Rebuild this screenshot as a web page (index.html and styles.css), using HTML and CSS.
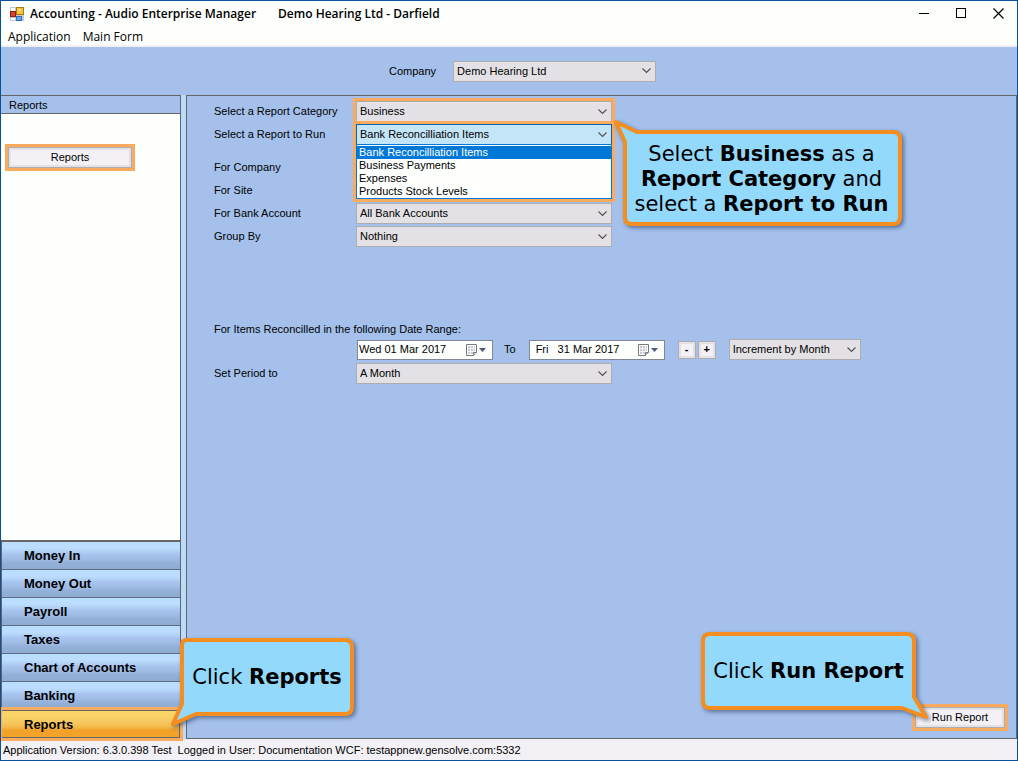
FILE: index.html
```html
<!DOCTYPE html>
<html lang="en">
<head>
    <meta charset="UTF-8">
    <meta name="viewport" content="width=device-width, initial-scale=1.0">
    <title>Accounting - Audio Enterprise Manager</title>
    <link rel="stylesheet" href="styles.css">
</head>
<body>
    <header class="title-bar">
        <svg class="app-icon" width="14" height="14" viewBox="0 0 14 14" aria-hidden="true">
            <rect width="14" height="14" fill="#c9c9cf"/>
            <rect x="1" y="1" width="4" height="3" fill="#fff"/>
            <rect x="1" y="11" width="4" height="2" fill="#fff"/>
            <rect x="0" y="4" width="6" height="6" fill="#8c1d12"/>
            <rect x="1" y="5" width="4" height="4" fill="#d8432c"/>
            <rect x="6" y="0" width="8" height="8" fill="#a87a10"/>
            <rect x="7" y="1" width="6" height="6" fill="#f7c33a"/>
            <rect x="8" y="2" width="3" height="2" fill="#fde08a"/>
            <rect x="6" y="9" width="6" height="5" fill="#2b6fc4"/>
            <rect x="7" y="10" width="4" height="3" fill="#62abf0"/>
        </svg>
        <h1 class="app-title">Accounting - Audio Enterprise Manager</h1>
        <span class="site-title">Demo Hearing Ltd - Darfield</span>
        <div class="window-buttons">
            <button type="button" aria-label="Minimize">
                <svg width="11" height="11" viewBox="0 0 11 11"><path d="M0 5.5H10" stroke="#000"/></svg>
            </button>
            <button type="button" aria-label="Maximize">
                <svg width="11" height="11" viewBox="0 0 11 11"><rect x="0.5" y="0.5" width="9" height="9" fill="none" stroke="#000"/></svg>
            </button>
            <button type="button" aria-label="Close">
                <svg width="11" height="11" viewBox="0 0 11 11"><path d="M0.5 0.5L10.5 10.5M10.5 0.5L0.5 10.5" stroke="#000" stroke-width="1.2"/></svg>
            </button>
        </div>
    </header>

    <nav class="menu-bar">
        <a href="#">Application</a>
        <a href="#">Main Form</a>
    </nav>

    <div class="company-bar">
        <label for="company">Company</label>
        <select id="company" class="combo company-combo"><option>Demo Hearing Ltd</option></select>
    </div>

    <div class="workspace">
        <aside class="sidebar">
            <h2 class="sidebar-title">Reports</h2>
            <div class="sidebar-content">
                <button type="button" class="btn highlight">Reports</button>
            </div>
            <nav class="sidebar-nav">
                <button type="button">Money In</button>
                <button type="button">Money Out</button>
                <button type="button">Payroll</button>
                <button type="button">Taxes</button>
                <button type="button">Chart of Accounts</button>
                <button type="button">Banking</button>
                <button type="button" class="active highlight">Reports</button>
                <div class="callout callout-reports">
                    <svg width="190" height="98" viewBox="0 0 190 98" aria-hidden="true">
                        <path d="M21 6H180Q187 6 187 13V73Q187 80 180 80H31L8 90L17 70V11Q17 6 22 6Z"/>
                    </svg>
                    <p>Click <b>Reports</b></p>
                </div>
            </nav>
        </aside>

        <main class="panel">
            <form class="report-form">
                <label for="category">Select a Report Category</label>
                <select id="category" class="combo highlight"><option>Business</option></select>

                <label for="report">Select a Report to Run</label>
                <div class="open-combo">
                    <select id="report" class="combo"><option>Bank Reconcilliation Items</option></select>
                    <div class="combo-list highlight">
                        <ul role="listbox" aria-label="Select a Report to Run">
                            <li role="option" aria-selected="true">Bank Reconcilliation Items</li>
                            <li role="option">Business Payments</li>
                            <li role="option">Expenses</li>
                            <li role="option">Products Stock Levels</li>
                        </ul>
                    </div>
                    <div class="callout callout-category">
                        <svg width="296" height="114" viewBox="0 0 296 114" aria-hidden="true">
                            <path d="M26 13H282Q289 13 289 20V98Q289 105 282 105H21Q14 105 14 98V23L5 3Z"/>
                        </svg>
                        <p>Select <b>Business</b> as a<br><b>Report Category</b> and<br>select a <b>Report to Run</b></p>
                    </div>
                </div>

                <label for="for-company" class="group-start">For Company</label>
                <select id="for-company" class="combo group-start"></select>

                <label for="for-site">For Site</label>
                <select id="for-site" class="combo"></select>

                <label for="bank-account">For Bank Account</label>
                <select id="bank-account" class="combo"><option>All Bank Accounts</option></select>

                <label for="group-by">Group By</label>
                <select id="group-by" class="combo"><option>Nothing</option></select>
            </form>

            <form class="date-form">
                <p class="date-heading">For Items Reconcilled in the following Date Range:</p>
                <div class="date-row">
                    <div class="date-box">
                        <input type="text" aria-label="From date" value="Wed 01 Mar 2017">
                        <button type="button" aria-label="Open from calendar">
                            <svg width="22" height="14" viewBox="0 0 22 14">
                                <path d="M1.500 1.500H11.500V9.500L8.500 12.500H1.500Z" fill="#fff" stroke="#77797d"/>
                                <path d="M3 3H10V9L8 11H3Z" fill="#c3cad4"/>
                                <path d="M3 5.500H10M3 8.500H10M5.500 3V11M8.500 3V10" stroke="#f4f4f4" fill="none"/>
                                <path d="M8.500 12.500V9.500H11.500" fill="#d4d4d4" stroke="#77797d"/>
                                <path d="M14 5H21L17.500 9Z" fill="#4b5a7d"/>
                            </svg>
                        </button>
                    </div>
                    <label for="to-date">To</label>
                    <div class="date-box date-to">
                        <input type="text" id="to-date" value="Fri   31 Mar 2017">
                        <button type="button" aria-label="Open to calendar">
                            <svg width="22" height="14" viewBox="0 0 22 14">
                                <path d="M1.500 1.500H11.500V9.500L8.500 12.500H1.500Z" fill="#fff" stroke="#77797d"/>
                                <path d="M3 3H10V9L8 11H3Z" fill="#c3cad4"/>
                                <path d="M3 5.500H10M3 8.500H10M5.500 3V11M8.500 3V10" stroke="#f4f4f4" fill="none"/>
                                <path d="M8.500 12.500V9.500H11.500" fill="#d4d4d4" stroke="#77797d"/>
                                <path d="M14 5H21L17.500 9Z" fill="#4b5a7d"/>
                            </svg>
                        </button>
                    </div>
                    <div class="step-buttons">
                        <button type="button" class="btn">-</button>
                        <button type="button" class="btn">+</button>
                    </div>
                    <select class="combo increment-combo" aria-label="Increment"><option>Increment by Month</option></select>
                </div>
                <div class="period-row">
                    <label for="period">Set Period to</label>
                    <select id="period" class="combo"><option>A Month</option></select>
                </div>
            </form>

            <div class="actions">
                <button type="button" class="btn highlight">Run Report</button>
                <div class="callout callout-run">
                    <svg width="234" height="98" viewBox="0 0 234 98" aria-hidden="true">
                        <path d="M13 6H210Q217 6 217 13V69L229 89L205 80H13Q6 80 6 73V13Q6 6 13 6Z"/>
                    </svg>
                    <p>Click <b>Run Report</b></p>
                </div>
            </div>
        </main>
    </div>

    <footer class="status-bar">
        <span>Application Version: 6.3.0.398 Test</span>
        <span>Logged in User: Documentation WCF: testappnew.gensolve.com:5332</span>
    </footer>
</body>
</html>
```
FILE: styles.css
```css
* {
    margin: 0;
    padding: 0;
    box-sizing: border-box;
}

body {
    font-family: "Liberation Sans", Arial, sans-serif;
    font-size: 11px;
    line-height: 13px;
    color: #000;
    background: #a4c0eb;
    border: 1px solid #0a519c;
    min-height: 100vh;
    display: flex;
    flex-direction: column;
}

button, input, select {
    font: inherit;
    color: inherit;
}

/* Title and menu */
.title-bar {
    display: flex;
    align-items: center;
    height: 25px;
    padding-left: 9px;
    background: #fdfffd;
    font-family: "Open Sans", "Segoe UI", sans-serif;
    font-size: 12px;
    font-weight: 600;
}

.app-title {
    font-size: 12px;
    font-weight: 600;
    margin: 0 22px 0 6px;
}

.window-buttons {
    display: flex;
    margin-left: auto;
}

.window-buttons button {
    display: flex;
    align-items: center;
    justify-content: center;
    width: 37px;
    height: 24px;
    border: none;
    background: none;
}

.menu-bar {
    display: flex;
    gap: 12px;
    height: 21px;
    padding: 4px 7px;
    background: #fdfffd;
    border-bottom: 2px solid #f3f1f5;
    font-family: "Open Sans", "Segoe UI", sans-serif;
    font-size: 12px;
}

.menu-bar a {
    color: #000;
    text-decoration: none;
}

/* Shared controls */
.combo {
    appearance: none;
    display: block;
    width: 100%;
    height: 21px;
    padding: 0 20px 0 3px;
    border: 1px solid #adadad;
    border-radius: 0;
    background: #e3e1e5 url("data:image/svg+xml,%3Csvg xmlns='http://www.w3.org/2000/svg' width='9' height='6'%3E%3Cpath d='M.5 .5L4.500 4.500L8.500 .5' fill='none' stroke='%23505050' stroke-width='1.100'/%3E%3C/svg%3E") no-repeat right 4px center;
}

.btn {
    height: 21px;
    border: 1px solid #adadad;
    background: #f3f1f5;
    box-shadow: inset 0 0 0 2px #e3e1e5;
}

.highlight {
    outline: 3px solid #fbab5d;
}

.company-bar {
    display: flex;
    align-items: center;
    gap: 17px;
    height: 48px;
    padding-left: 388px;
}

.company-combo {
    width: 203px;
}

/* Left side */
.workspace {
    flex: 1;
    display: flex;
    gap: 5px;
    background: #b9dcfd;
}

.sidebar {
    display: flex;
    flex-direction: column;
    width: 180px;
    border: 1px solid #666;
    border-left: none;
    background: #fdfffd;
}

.sidebar-title {
    padding: 3px 8px 1px;
    font-size: 11px;
    font-weight: normal;
    background: #a4c0eb;
    border-bottom: 1px solid #666;
}

.sidebar-content {
    flex: 1;
    padding: 33px 48px 0 7px;
}

.sidebar-content .btn {
    width: 100%;
}

.sidebar-nav {
    position: relative;
    display: flex;
    flex-direction: column;
    border-top: 2px solid #666;
    border-left: 1px solid #666;
}

.sidebar-nav button {
    height: 28px;
    padding-left: 22px;
    border: none;
    border-bottom: 1px solid #5f6c80;
    text-align: left;
    font-size: 13px;
    font-weight: bold;
    background: linear-gradient(#bbdefe 0 6px, #b4d3f8 9px, #a8c5ee 12px, #a0bce6 17px, #93b0d8 21px, #8eacd3);
}

.sidebar-nav .active {
    border: 1px solid #666;
    border-left: none;
    background: linear-gradient(#fbd468 0 5px, #f6c961 11px, #f3bb4b 16px, #f3a229 19px, #f3a229);
}

/* Report panel */
.panel {
    flex: 1;
    display: flex;
    flex-direction: column;
    padding: 5px 8px 0 27px;
    border: 1px solid #666;
    background: #a4c0eb;
}

.report-form {
    display: grid;
    grid-template-columns: 142px minmax(0, 256px);
    row-gap: 2px;
    align-items: center;
}

.group-start {
    margin-top: 10px;
}

.open-combo {
    position: relative;
    z-index: 2;
}

.open-combo .combo {
    background-color: #c4e5f8;
    border-color: #0a5fae;
}

.combo-list {
    position: absolute;
    top: 0;
    left: 0;
    width: 100%;
    padding-top: 20px;
    pointer-events: none;
}

.combo-list ul {
    list-style: none;
    padding: 1px 0 0;
    border: 1px solid #0078d7;
    background: #fdfffd;
}

.combo-list li {
    padding-left: 2px;
}

.combo-list li[aria-selected="true"] {
    color: #fff;
    background: #0078d7;
}

.date-form {
    margin-top: 76px;
}

.date-row {
    display: flex;
    align-items: center;
    height: 21px;
    margin: 3px 0 3px 143px;
}

.date-row label {
    padding: 0 13px 0 11px;
}

.date-box {
    display: flex;
    align-items: center;
    width: 136px;
    height: 20px;
    border: 1px solid #7f8792;
    background: #fdfffd;
}

.date-box input {
    flex: 1;
    min-width: 0;
    padding-left: 1px;
    border: none;
    background: none;
}

.date-to input {
    padding-left: 6px;
}

.date-box button {
    display: flex;
    padding-right: 5px;
    border: none;
    background: none;
}

.step-buttons {
    display: flex;
    gap: 2px;
    margin: 0 13px;
}

.step-buttons .btn {
    width: 18px;
    height: 18px;
    font-weight: bold;
}

.increment-combo {
    width: 132px;
}

.period-row {
    display: grid;
    grid-template-columns: 142px minmax(0, 256px);
    align-items: center;
}

.actions {
    position: relative;
    display: flex;
    justify-content: flex-end;
    margin-top: auto;
    padding: 0 3px 10px;
}

.actions .btn {
    width: 90px;
}

/* Callouts */
.callout {
    position: absolute;
    z-index: 3;
    font-family: "DejaVu Sans", Verdana, sans-serif;
    font-size: 21px;
    line-height: 25px;
    text-align: center;
    white-space: nowrap;
}

.callout svg {
    display: block;
    filter: drop-shadow(2px 2px 2px rgba(40, 60, 100, 0.6));
}

.callout path {
    fill: #92d9fc;
    stroke: #f48e20;
    stroke-width: 4;
    stroke-linejoin: round;
}

.callout p {
    position: absolute;
}

.callout-category {
    top: -5px;
    left: 255px;
}

.callout-category p {
    inset: 23px 8px auto 13px;
}

.callout-reports {
    left: 163px;
    bottom: 6px;
}

.callout-reports p {
    inset: 31px 3px auto 17px;
}

.callout-run {
    right: 77px;
    bottom: 12px;
}

.callout-run p {
    inset: 31px 17px auto 6px;
}

.status-bar {
    display: flex;
    gap: 6px;
    padding: 5px 2px 3px;
    background: #f3f1f5;
}
```
